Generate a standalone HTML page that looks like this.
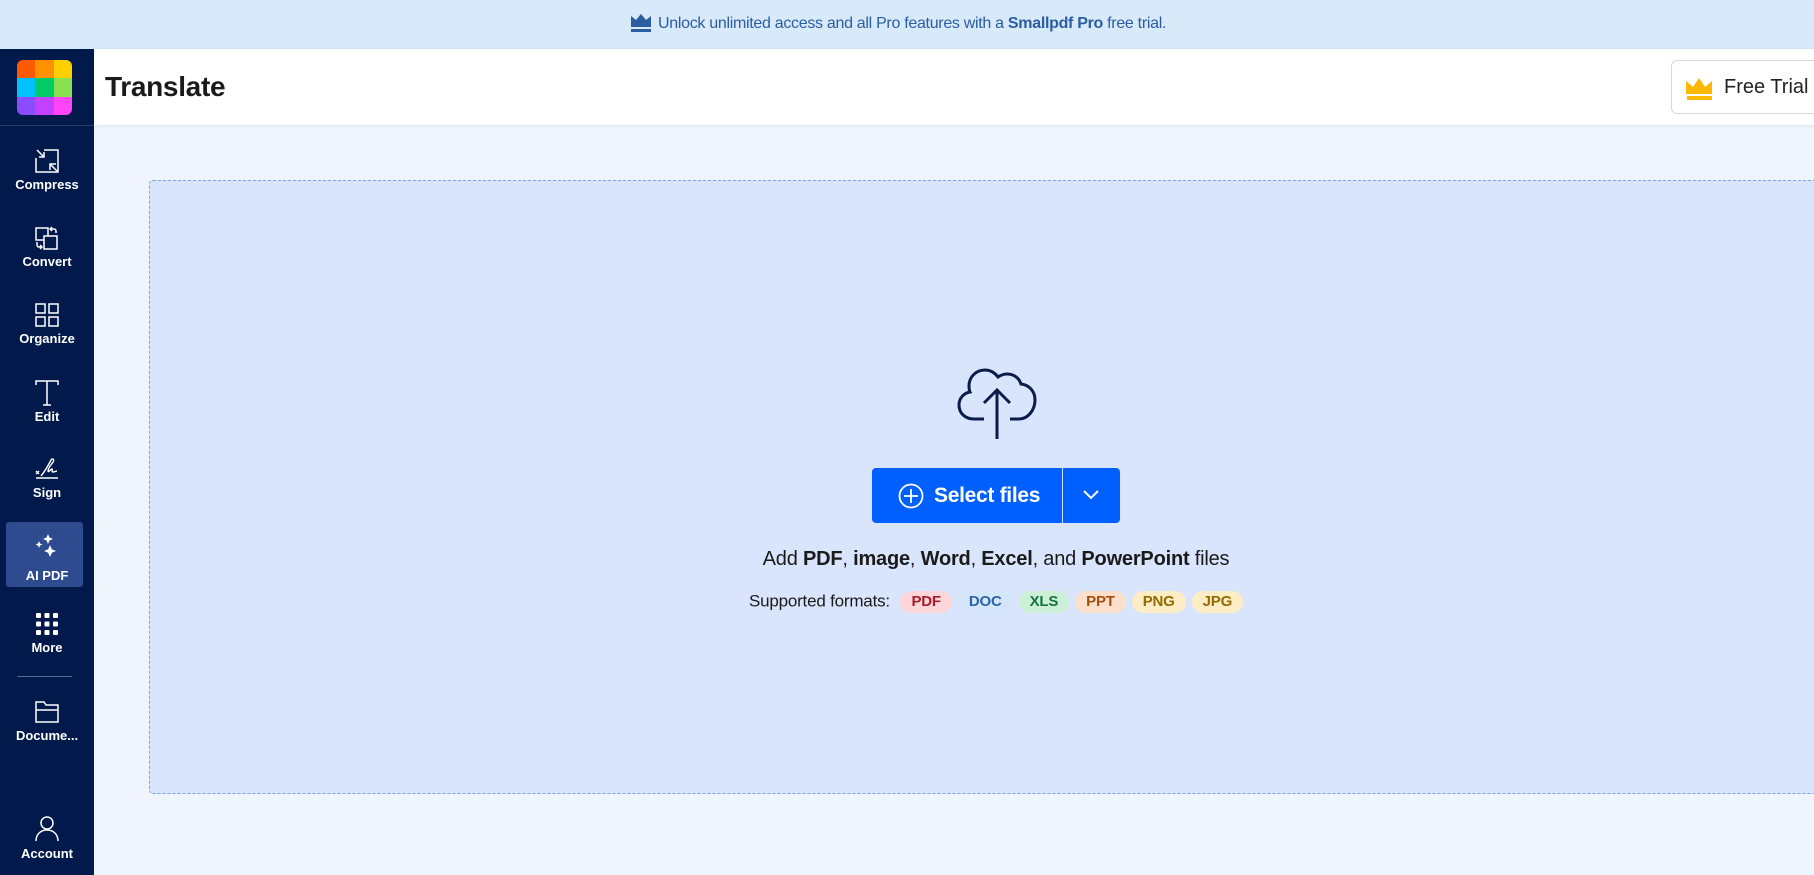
<!DOCTYPE html>
<html><head><meta charset="utf-8"><style>
*{margin:0;padding:0;box-sizing:border-box}
body{width:1814px;height:875px;overflow:hidden;font-family:"Liberation Sans",sans-serif;background:#f0f5fd;position:relative}
.banner{position:absolute;left:0;top:0;width:1814px;height:49px;background:#d8e9fa;color:#2a5ea0;font-size:16px;letter-spacing:-0.3px}
.banner .t{position:absolute;left:658px;top:15px;white-space:nowrap}
.side{position:absolute;left:0;top:49px;width:94px;height:826px;background:#021a4b}
.logo{position:absolute;left:17px;top:11px;width:55px;height:55px;border-radius:6px;overflow:hidden;display:grid;grid-template-columns:18px 19px 18px;grid-template-rows:18px 19px 18px}
.sep{position:absolute;left:0;top:76px;width:94px;height:1px;background:#2a3f6a}
.item{position:absolute;left:0;width:94px;text-align:center;color:#fff;font-size:13px;font-weight:bold}
.item svg{position:absolute;left:35px}
.item span{position:absolute;left:0;width:94px;text-align:center}
.header{position:absolute;left:94px;top:49px;width:1720px;height:76px;background:#fff;box-shadow:0 1px 4px rgba(0,0,0,.08)}
.header h1{position:absolute;left:11px;top:22px;font-size:28px;color:#1a1a1a;letter-spacing:-0.3px}
.ft{position:absolute;left:1577px;top:11px;width:160px;height:54px;border:1px solid #d6d6d6;border-radius:6px;background:#fff}
.ft span{position:absolute;left:52px;top:15px;font-size:20px;color:#222}
.drop{position:absolute;left:149px;top:180px;width:1700px;height:614px;background:#d9e5fc;border:1px dashed #7aa3ee;border-radius:4px}
.btn{position:absolute;left:872px;top:468px;width:248px;height:55px;background:#0060ff;border-radius:4px;color:#fff}
.btn .div{position:absolute;left:190px;top:0;width:1px;height:55px;background:#cfe0ff}
.btn b{position:absolute;left:62px;top:16px;font-size:21px;letter-spacing:-0.3px}
.line{position:absolute;left:0;width:1814px;text-align:center;color:#1a1a1a}
.chip{display:inline-block;padding:0 11px;height:22px;line-height:22px;border-radius:11px;font-weight:bold;font-size:15px;margin-left:6px;vertical-align:middle}
</style></head><body>
<div class="banner">
<svg style="position:absolute;left:630px;top:13px" width="22" height="20" viewBox="0 0 22 20"><path d="M1 3l5 4 5-6 5 6 5-4v11H1z" fill="#2a5ea0"/><rect x="1" y="16" width="20" height="3" fill="#2a5ea0"/></svg>
<div class="t">Unlock unlimited access and all Pro features with a <b>Smallpdf Pro</b> free trial.</div>
</div>
<div class="side">
<div class="logo">
<div style="background:#ff5a00"></div><div style="background:#ff9000"></div><div style="background:#ffd000"></div>
<div style="background:#00c0ff"></div><div style="background:#00cc66"></div><div style="background:#88e052"></div>
<div style="background:#8b4cff"></div><div style="background:#c342ff"></div><div style="background:#ff45f5"></div>
</div>
<div class="sep"></div>
</div>
<div class="item" style="top:149px"><svg width="24" height="24" viewBox="0 0 24 24" fill="none" stroke="#fff" stroke-width="1.5"><path d="M9 1h14v22H1V9"/><path d="M2 1l7 7M9 3v5H4M22 22l-7-7M15 21v-6h6"/></svg><span style="top:28px">Compress</span></div>
<div class="item" style="top:225px"><svg width="24" height="26" viewBox="0 0 24 26" fill="none" stroke="#fff" stroke-width="1.5"><rect x="1" y="3" width="12" height="12"/><rect x="9" y="11" width="13" height="13" fill="#021a4b"/><path d="M17 2l-2 2 2 2M15 4h4a2 2 0 0 1 2 2v2M2 17v3a2 2 0 0 0 2 2h3M5 20l2 2-2 2"/></svg><span style="top:29px">Convert</span></div>
<div class="item" style="top:303px"><svg width="24" height="24" viewBox="0 0 24 24" fill="none" stroke="#fff" stroke-width="1.5"><rect x="1" y="1" width="9" height="9"/><rect x="14" y="1" width="9" height="9"/><rect x="1" y="14" width="9" height="9"/><rect x="14" y="14" width="9" height="9"/></svg><span style="top:28px">Organize</span></div>
<div class="item" style="top:380px"><svg width="24" height="26" viewBox="0 0 24 26" fill="none" stroke="#fff" stroke-width="1.5"><path d="M1 5V1h22v4M12 1v24M8 25h8"/></svg><span style="top:29px">Edit</span></div>
<div class="item" style="top:457px"><svg width="24" height="24" viewBox="0 0 24 24" fill="none" stroke="#fff" stroke-width="1.4"><path d="M1 14l3 3M4 14l-3 3M1 21h22M6 19c4-5 8-12 10-16 1-2 4-1 2 2-2 3-5 6-5 9 0 2 3-2 4-2s-1 3 1 3 3-1 4-1"/></svg><span style="top:28px">Sign</span></div>
<div style="position:absolute;left:6px;top:522px;width:77px;height:65px;background:#2d4b8e;border-radius:3px"></div>
<div class="item" style="top:534px"><svg width="24" height="24" viewBox="0 0 24 24" fill="#fff"><path d="M13 0l1.5 3.5L18 5l-3.5 1.5L13 10l-1.5-3.5L8 5l3.5-1.5z"/><path d="M4 7l1 2.5L7.5 10.5 5 11.5 4 14 3 11.5.5 10.5 3 9.5z"/><path d="M15 11l1.8 4.2L21 17l-4.2 1.8L15 23l-1.8-4.2L9 17l4.2-1.8z"/></svg><span style="top:34px">AI PDF</span></div>
<div class="item" style="top:612px"><svg width="24" height="24" viewBox="0 0 24 24" fill="#fff"><rect x="1" y="1" width="5" height="5" rx="1"/><rect x="9.5" y="1" width="5" height="5" rx="1"/><rect x="18" y="1" width="5" height="5" rx="1"/><rect x="1" y="9.5" width="5" height="5" rx="1"/><rect x="9.5" y="9.5" width="5" height="5" rx="1"/><rect x="18" y="9.5" width="5" height="5" rx="1"/><rect x="1" y="18" width="5" height="5" rx="1"/><rect x="9.5" y="18" width="5" height="5" rx="1"/><rect x="18" y="18" width="5" height="5" rx="1"/></svg><span style="top:28px">More</span></div>
<div style="position:absolute;left:17px;top:676px;width:55px;height:1px;background:#5a6d92"></div>
<div class="item" style="top:700px"><svg width="24" height="24" viewBox="0 0 24 24" fill="none" stroke="#fff" stroke-width="1.5"><path d="M1 2h8l2 3h12v17H1z"/><path d="M1 10h22"/></svg><span style="top:28px">Docume...</span></div>
<div class="item" style="top:816px"><svg width="24" height="26" viewBox="0 0 24 26" fill="none" stroke="#fff" stroke-width="1.5"><circle cx="12" cy="7" r="6"/><path d="M1 25c0-7 5-11 11-11s11 4 11 11"/></svg><span style="top:30px">Account</span></div>
<div class="header"><h1>Translate</h1>
<div class="ft"><svg style="position:absolute;left:14px;top:16px" width="27" height="23" viewBox="0 0 27 23"><path d="M0 4l7 6 6-9 6 9 7-6v13H0z" fill="#ffb800"/><rect x="1" y="19" width="25" height="4" fill="#ffb800"/></svg><span>Free Trial</span></div>
</div>
<div class="drop"></div>
<svg style="position:absolute;left:956px;top:367px" width="82" height="74" viewBox="0 0 82 74" fill="none" stroke="#0a1d4a" stroke-width="3"><path d="M28 52H18C9 52 3 46 3 38c0-7 5-12 11-13C13 23 13 21 13 19 13 10 20 3 29 3c6 0 10 3 13 7 3-2 6-3 9-3 7 0 12 4 14 10 8 1 14 7 14 16 0 10-7 19-16 19H54"/><path d="M41 72V23M28 36l13-13 13 13"/></svg>
<div class="btn"><svg style="position:absolute;left:26px;top:15px" width="26" height="26" viewBox="0 0 26 26" fill="none" stroke="#fff" stroke-width="1.8"><circle cx="13" cy="13" r="11.5"/><path d="M13 6v14M6 13h14"/></svg><b>Select files</b><div class="div"></div><svg style="position:absolute;left:210px;top:21px" width="18" height="12" viewBox="0 0 18 12" fill="none" stroke="#fff" stroke-width="2"><path d="M2 2l7 7 7-7"/></svg></div>
<div class="line" style="top:548px;padding-left:178px;font-size:20px;letter-spacing:-0.2px">Add <b>PDF</b>, <b>image</b>, <b>Word</b>, <b>Excel</b>, and <b>PowerPoint</b> files</div>
<div class="line" style="top:591px;padding-left:178px;font-size:17px;letter-spacing:-0.2px">Supported formats: <span class="chip" style="background:#fdd6d9;color:#a51d2d">PDF</span><span class="chip" style="background:#d5e6fb;color:#2a64a8">DOC</span><span class="chip" style="background:#ccefd8;color:#14753a">XLS</span><span class="chip" style="background:#fde0cc;color:#a44e10">PPT</span><span class="chip" style="background:#fdedc4;color:#946b00">PNG</span><span class="chip" style="background:#fdedc4;color:#946b00">JPG</span></div>
</body></html>
